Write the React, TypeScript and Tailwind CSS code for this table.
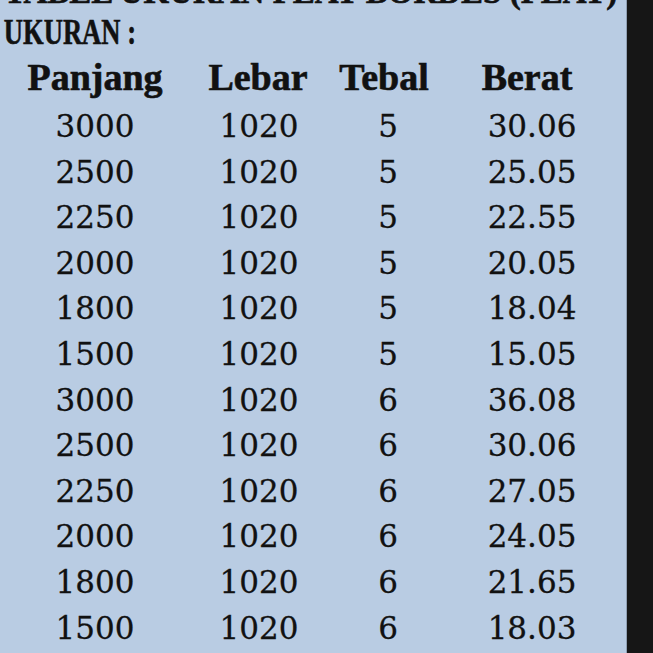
const rows = [
  ['3000', '1020', '5', '30.06'],
  ['2500', '1020', '5', '25.05'],
  ['2250', '1020', '5', '22.55'],
  ['2000', '1020', '5', '20.05'],
  ['1800', '1020', '5', '18.04'],
  ['1500', '1020', '5', '15.05'],
  ['3000', '1020', '6', '36.08'],
  ['2500', '1020', '6', '30.06'],
  ['2250', '1020', '6', '27.05'],
  ['2000', '1020', '6', '24.05'],
  ['1800', '1020', '6', '21.65'],
  ['1500', '1020', '6', '18.03'],
]

const headers = ['Panjang', 'Lebar', 'Tebal', 'Berat']

export default function App() {
  return (
    <div className="flex w-[653px] h-[653px] overflow-hidden bg-[#161616]">
      {/* Sheet */}
      <div className="w-[627px] h-full bg-[#b9cce3] text-[#111] overflow-hidden border-r border-[#8f9fb3]">
        {/* Title row, cut off by the crop */}
        <div className="h-[13px] overflow-hidden">
          <div className="-mt-[28px] pl-[4px] leading-[40px] text-[34px] font-bold whitespace-nowrap font-['Liberation_Serif',serif] origin-left scale-x-[0.97] [-webkit-text-stroke:0.6px_#111]">
            TABEL UKURAN PLAT BORDES (PLAT)
          </div>
        </div>

        <div className="h-[41px] pl-[5px] leading-[40px] text-[35px] font-bold font-['Liberation_Serif',serif] origin-left scale-x-[0.76] whitespace-nowrap [-webkit-text-stroke:0.6px_#111]">
          UKURAN :
        </div>

        <div className="grid grid-cols-[190px_136px_116px_170px] h-[50px] leading-[46px] text-[38px] font-bold font-['Liberation_Serif',serif] [-webkit-text-stroke:0.6px_#111]">
          {headers.map((h) => (
            <div key={h} className="text-center">
              {h}
            </div>
          ))}
        </div>

        <div className="font-['DejaVu_Serif',serif] text-[31px] [-webkit-text-stroke:0.3px_#111]">
          {rows.map((r, i) => (
            <div key={i} className="grid grid-cols-[190px_138px_120px_168px] h-[45.6px] leading-[45.6px]">
              {r.map((c, j) => (
                <div key={j} className="text-center">
                  {c}
                </div>
              ))}
            </div>
          ))}
        </div>
      </div>
      <div className="flex-1" />
    </div>
  )
}
